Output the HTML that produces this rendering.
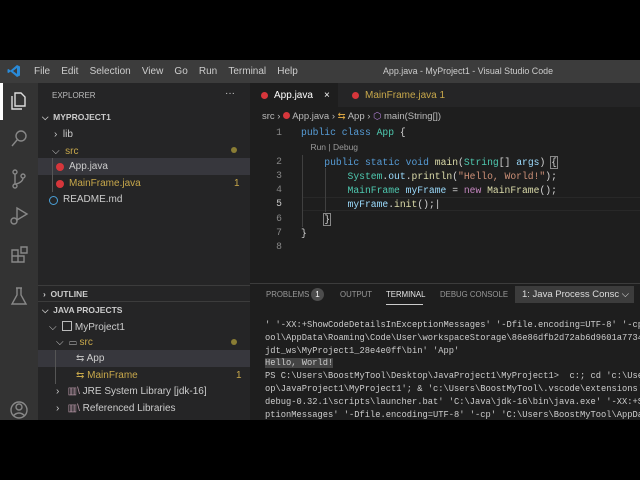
<!DOCTYPE html>
<html><head><style>
*{margin:0;padding:0;box-sizing:border-box}
body{width:640px;height:480px;background:#000;position:relative;overflow:hidden;font-family:"Liberation Sans",sans-serif;font-size:10px;color:#ccc}
.a{position:absolute;white-space:nowrap}
.m{font-family:"Liberation Mono",monospace}
.ic{position:absolute}
</style></head><body>
<!-- title bar -->
<div class="a" style="left:0;top:60px;width:640px;height:23px;background:#3c3c3c"></div>
<svg class="ic" style="left:7px;top:64px" width="14" height="14" viewBox="0 0 14 14"><path d="M10 1 L13 2.5 V11.5 L10 13 L3.5 7.5 L1.5 9 L0.5 8.5 V5.5 L1.5 5 L3.5 6.5 Z M10 4 L6 7 L10 10 Z" fill="#2a8ad8" fill-rule="evenodd"/></svg>
<div class="a" style="left:34px;top:66px;font-size:10px;color:#ccc;word-spacing:0">File&nbsp;&nbsp;&nbsp;&nbsp;Edit&nbsp;&nbsp;&nbsp;&nbsp;Selection&nbsp;&nbsp;&nbsp;&nbsp;View&nbsp;&nbsp;&nbsp;&nbsp;Go&nbsp;&nbsp;&nbsp;&nbsp;Run&nbsp;&nbsp;&nbsp;&nbsp;Terminal&nbsp;&nbsp;&nbsp;&nbsp;Help</div>
<div class="a" style="left:383px;top:66px;font-size:8.9px;color:#ccc">App.java - MyProject1 - Visual Studio Code</div>
<!-- activity bar -->
<div class="a" style="left:0;top:83px;width:38px;height:337px;background:#333"></div>
<div class="a" style="left:0;top:83px;width:3px;height:37px;background:#fff"></div>
<svg class="ic" style="left:9px;top:90px" width="20" height="330" viewBox="0 0 20 330" fill="none" stroke="#888" stroke-width="1.4">
<g stroke="#ddd"><path d="M6 3 H12 L16 7 V16 H6 Z M3 6 V19 H13"/></g>
<circle cx="12" cy="46" r="5"/><path d="M8 50 L3 56"/>
<circle cx="6" cy="82" r="2"/><circle cx="14" cy="86" r="2"/><circle cx="6" cy="96" r="2"/><path d="M6 84 V94 M14 88 Q14 92 7 94"/>
<path d="M8 118 L8 130 L18 124 Z"/><circle cx="5" cy="131" r="3"/>
<path d="M3 160 H9 V166 H3 Z M3 166 H9 V172 H3 Z M9 166 H15 V172 H9 Z M12 157 H18 V163 H12 Z"/>
<path d="M7 198 H13 M8 198 V205 L3 214 H17 L12 205 V198"/>
<circle cx="10" cy="320" r="8"/><circle cx="10" cy="317" r="3"/><path d="M4 326 Q10 320 16 326"/>
</svg>
<!-- sidebar -->
<div class="a" style="left:38px;top:83px;width:212px;height:337px;background:#252526"></div>
<div class="a" style="left:52px;top:91px;font-size:8px;color:#bbb">EXPLORER</div>
<div class="a" style="left:225px;top:88px;font-size:10px;color:#ccc">···</div>
<div class="a" style="left:42px;top:112px;font-size:8.5px;font-weight:bold;color:#ccc">⌵&nbsp; MYPROJECT1</div>
<div class="a" style="left:54px;top:129px;font-size:10px;color:#ccc">›&nbsp; lib</div>
<div class="a" style="left:52px;top:146px;font-size:10px;color:#c8a84b"><span style="color:#ccc">⌵</span>&nbsp; src</div>
<div class="a" style="left:231px;top:147px;width:6px;height:6px;border-radius:50%;background:#8a7d34"></div>
<div class="a" style="left:38px;top:158px;width:212px;height:17px;background:#37373d"></div>
<div class="a" style="left:52px;top:158px;width:1px;height:34px;background:#555"></div>
<div class="a" style="left:56px;top:163px;width:8px;height:8px;border-radius:50%;background:#d6363b"></div>
<div class="a" style="left:69px;top:161px;font-size:10px;color:#ccc">App.java</div>
<div class="a" style="left:56px;top:180px;width:8px;height:8px;border-radius:50%;background:#d6363b"></div>
<div class="a" style="left:69px;top:178px;font-size:10px;color:#c8a84b">MainFrame.java</div>
<div class="a" style="left:234px;top:178px;font-size:10px;color:#c8a84b">1</div>
<div class="a" style="left:49px;top:196px;width:9px;height:9px;border-radius:50%;border:1px solid #4aa0d8"></div>
<div class="a" style="left:63px;top:194px;font-size:10px;color:#ccc">README.md</div>
<div class="a" style="left:38px;top:285px;width:212px;height:1px;background:#3c3c3c"></div>
<div class="a" style="left:43px;top:289px;font-size:8.5px;font-weight:bold;color:#ccc">›&nbsp; OUTLINE</div>
<div class="a" style="left:38px;top:301px;width:212px;height:1px;background:#3c3c3c"></div>
<div class="a" style="left:42px;top:305px;font-size:8.5px;font-weight:bold;color:#ccc">⌵&nbsp; JAVA PROJECTS</div>
<div class="a" style="left:49px;top:321px;font-size:10px;color:#ccc">⌵&nbsp; <span style="display:inline-block;width:10px;height:10px;border:1.3px solid #bbb;vertical-align:-1px"></span>&nbsp;MyProject1</div>
<div class="a" style="left:56px;top:337px;font-size:10px;color:#c8a84b"><span style="color:#ccc">⌵&nbsp; ▭</span>&nbsp;src</div>
<div class="a" style="left:231px;top:339px;width:6px;height:6px;border-radius:50%;background:#8a7d34"></div>
<div class="a" style="left:38px;top:350px;width:212px;height:17px;background:#37373d"></div>
<div class="a" style="left:55px;top:350px;width:1px;height:34px;background:#555"></div>
<div class="a" style="left:76px;top:353px;font-size:10px;color:#ccc"><span style="color:#bbb">⇆</span> App</div>
<div class="a" style="left:76px;top:370px;font-size:10px;color:#c8a84b">⇆ MainFrame</div>
<div class="a" style="left:236px;top:370px;font-size:10px;color:#c8a84b">1</div>
<div class="a" style="left:56px;top:386px;font-size:10px;color:#ccc">›&nbsp;&nbsp; <span style="color:#b9a">▥\</span> JRE System Library [jdk-16]</div>
<div class="a" style="left:56px;top:403px;font-size:10px;color:#ccc">›&nbsp;&nbsp; <span style="color:#b9a">▥\</span> Referenced Libraries</div>
<!-- editor -->
<div class="a" style="left:250px;top:83px;width:390px;height:200px;background:#1e1e1e"></div>
<div class="a" style="left:250px;top:83px;width:390px;height:24px;background:#252526"></div>
<div class="a" style="left:250px;top:83px;width:88px;height:24px;background:#1e1e1e"></div>
<div class="a" style="left:261px;top:92px;width:7px;height:7px;border-radius:50%;background:#d6363b"></div>
<div class="a" style="left:274px;top:90px;font-size:10px;color:#fff">App.java&nbsp;&nbsp;&nbsp;&nbsp;×</div>
<div class="a" style="left:352px;top:92px;width:7px;height:7px;border-radius:50%;background:#d6363b"></div>
<div class="a" style="left:365px;top:90px;font-size:10px;color:#c8a84b">MainFrame.java 1</div>
<div class="a" style="left:262px;top:111px;font-size:9.5px;color:#bbb">src › <span style="display:inline-block;width:7px;height:7px;border-radius:50%;background:#d6363b"></span> App.java › <span style="color:#d9a441">⇆</span> App › <span style="color:#b180d7">⬡</span> main(String[])</div>
<div class="a m" style="left:260px;top:126px;font-size:9.7px;line-height:14.3px;color:#858585;text-align:right;width:22px">1<br><br>2<br>3<br>4<br><span style="color:#c6c6c6">5</span><br>6<br>7<br>8</div>
<div class="a" style="left:302px;top:197px;width:338px;height:14px;border-top:1px solid #282828;border-bottom:1px solid #282828"></div>
<div class="a" style="left:302px;top:155px;width:1px;height:72px;background:#404040"></div>
<div class="a" style="left:325px;top:168px;width:1px;height:44px;background:#404040"></div>
<div class="a m" style="left:301px;top:126px;font-size:9.7px;line-height:14.3px;color:#d4d4d4;white-space:pre"><span style="color:#569cd6">public class</span> <span style="color:#4ec9b0">App</span> {
<span style="font-family:'Liberation Sans';font-size:8.5px;color:#999">    Run | Debug</span>
    <span style="color:#569cd6">public static void</span> <span style="color:#dcdcaa">main</span>(<span style="color:#4ec9b0">String</span>[] <span style="color:#9cdcfe">args</span>) <span style="outline:1px solid #888">{</span>
        <span style="color:#4ec9b0">System</span>.<span style="color:#9cdcfe">out</span>.<span style="color:#dcdcaa">println</span>(<span style="color:#ce9178">"Hello, World!"</span>);
        <span style="color:#4ec9b0">MainFrame</span> <span style="color:#9cdcfe">myFrame</span> = <span style="color:#c586c0">new</span> <span style="color:#dcdcaa">MainFrame</span>();
        <span style="color:#9cdcfe">myFrame</span>.<span style="color:#dcdcaa">init</span>();|
    <span style="outline:1px solid #888">}</span>
}</div>
<!-- panel -->
<div class="a" style="left:250px;top:283px;width:390px;height:137px;background:#1e1e1e;border-top:1px solid #3c3c3c"></div>
<div class="a" style="left:266px;top:290px;font-size:7.8px;color:#999">PROBLEMS</div>
<div class="a" style="left:311px;top:288px;width:13px;height:13px;border-radius:50%;background:#4d4d4d;color:#fff;font-size:8px;text-align:center;line-height:13px">1</div>
<div class="a" style="left:340px;top:290px;font-size:7.8px;color:#999">OUTPUT</div>
<div class="a" style="left:386px;top:290px;font-size:7.8px;color:#e7e7e7">TERMINAL</div>
<div class="a" style="left:386px;top:304px;width:37px;height:1px;background:#ccc"></div>
<div class="a" style="left:440px;top:290px;font-size:7.8px;color:#999">DEBUG CONSOLE</div>
<div class="a" style="left:515px;top:286px;width:119px;height:17px;background:#3c3c3c"></div>
<div class="a" style="left:522px;top:289px;font-size:9.5px;color:#ddd">1: Java Process Consc ⌵</div>
<div class="a m" style="left:265px;top:319px;font-size:8.75px;line-height:12.8px;color:#ccc;white-space:pre">' '-XX:+ShowCodeDetailsInExceptionMessages' '-Dfile.encoding=UTF-8' '-cp'
ool\AppData\Roaming\Code\User\workspaceStorage\86e86dfb2d72ab6d9601a7734
jdt_ws\MyProject1_28e4e0ff\bin' 'App'
<span style="background:#444">Hello, World!</span>
PS C:\Users\BoostMyTool\Desktop\JavaProject1\MyProject1>  c:; cd 'c:\Use
op\JavaProject1\MyProject1'; &amp; 'c:\Users\BoostMyTool\.vscode\extensions'
debug-0.32.1\scripts\launcher.bat' 'C:\Java\jdk-16\bin\java.exe' '-XX:+S
ptionMessages' '-Dfile.encoding=UTF-8' '-cp' 'C:\Users\BoostMyTool\AppDa</div>
<div class="a" style="left:0;top:420px;width:640px;height:60px;background:#000"></div>
</body></html>
